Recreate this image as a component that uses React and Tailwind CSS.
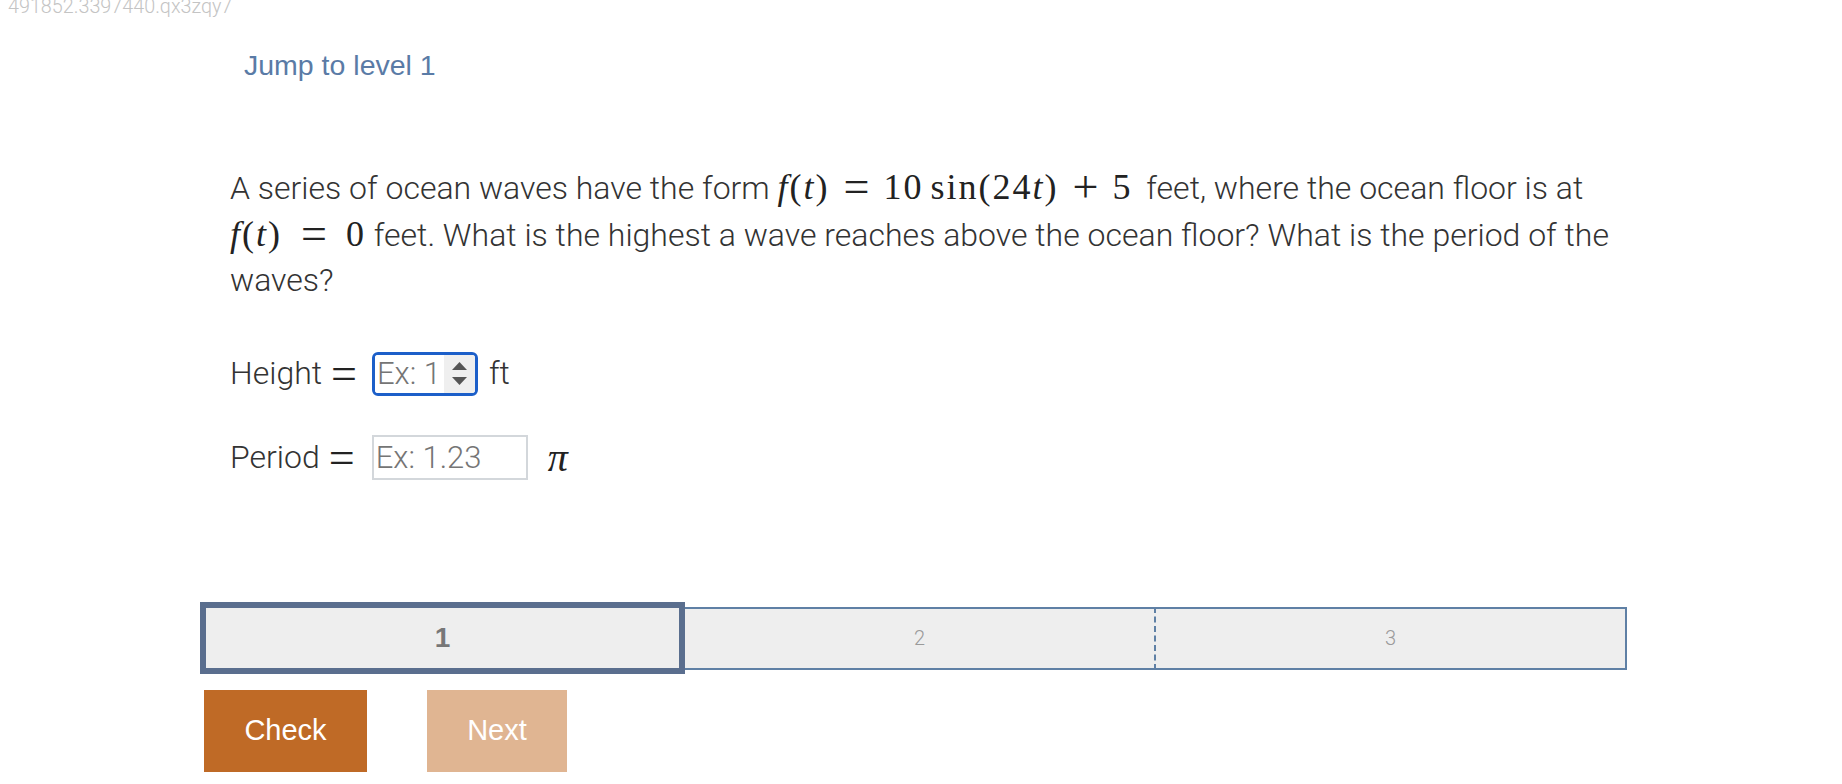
import React from 'react';

const Op = ({ children, gap = 'mx-[14px]' }) => (
  <span className={`inline-block text-[46px] leading-none align-[-3px] not-italic tracking-normal ${gap}`}>{children}</span>
);

const Math = ({ children, className = '' }) => (
  <span className={`font-['Liberation_Serif',serif] text-[36px] leading-none tracking-[2px] text-[#222] ${className}`}>{children}</span>
);

const Spinner = () => (
  <div className="flex h-full w-[31px] flex-col items-center justify-center gap-[7px] bg-[#efefef]">
    <svg width="15" height="8" viewBox="0 0 15 8">
      <path d="M7.5 0 L15 8 L0 8 Z" fill="#555" />
    </svg>
    <svg width="15" height="8" viewBox="0 0 15 8">
      <path d="M0 0 L15 0 L7.5 8 Z" fill="#555" />
    </svg>
  </div>
);

const App = () => {
  return (
    <div className="min-h-[784px] w-full bg-white font-['Roboto',sans-serif] font-light text-[#333]">
      <div className="h-[12px] pl-[8px] text-[19.75px] leading-[14.5px] text-[#c4c4c4]">491852.3397440.qx3zqy7</div>

      <div className="ml-[200px] w-[1427px]">
        <div className="ml-[44px] mt-[38px] h-[30px] font-['Liberation_Sans',Arial,sans-serif] text-[28.5px] font-normal leading-[30px] text-[#5a7ba6]">
          Jump to level 1
        </div>

        <p className="ml-[30px] mt-[84px] whitespace-nowrap text-[32px] leading-[45px]">
          A series of ocean waves have the form{' '}
          <Math className="mr-[6px]">
            <i>f</i>(<i>t</i>)<Op>=</Op>10<span className="ml-[7px]">sin</span>(24<i>t</i>)<Op gap="mx-[14px]">+</Op>5
          </Math>{' '}
          feet, where the ocean floor is at
          <br />
          <Math>
            <i>f</i>(<i>t</i>)<Op gap="mx-[19px]">=</Op>0
          </Math>{' '}
          feet. What is the highest a wave reaches above the ocean floor? What is the period of the
          <br />
          waves?
        </p>

        <div className="ml-[30px] mt-[48px] flex h-[45px] items-center text-[32px] leading-[45px]">
          <span>Height</span>
          <Math className="ml-[9px]">
            <Op gap="mx-0">=</Op>
          </Math>
          <div className="ml-[15px] flex h-[44px] w-[106px] overflow-hidden rounded-[6px] border-[3px] border-[#1c5fc9]">
            <input
              type="text"
              placeholder="Ex: 1"
              className="h-full w-0 flex-1 bg-white pl-[2px] font-['Roboto',sans-serif] text-[31px] font-light text-[#333] outline-none placeholder:text-[#757575]"
            />
            <Spinner />
          </div>
          <span className="ml-[11px]">ft</span>
        </div>

        <div className="ml-[30px] mt-[39px] flex h-[45px] items-center text-[32px] leading-[45px]">
          <span>Period</span>
          <Math className="ml-[9px]">
            <Op gap="mx-0">=</Op>
          </Math>
          <input
            type="text"
            placeholder="Ex: 1.23"
            className="ml-[17px] h-[45px] w-[156px] border-2 border-[#d3d7db] bg-white pl-[2px] font-['Roboto',sans-serif] text-[31px] font-light text-[#333] outline-none placeholder:text-[#757575]"
          />
          <Math className="ml-[20px] text-[40px]">
            <i>π</i>
          </Math>
        </div>

        <div className="mt-[122px] flex h-[72px] items-center">
          <div className="flex h-[72px] w-[485px] items-center justify-center border-[6px] border-[#5a6e8e] bg-[#eeeeee] font-['Liberation_Sans',Arial,sans-serif] text-[28px] font-bold text-[#777]">
            1
          </div>
          <div className="flex h-[63px] flex-1 items-center justify-center border-y-2 border-r-2 border-dashed border-y-[#5f80a5] border-r-[#5f80a5] bg-[#eeeeee] text-[20px] font-light text-[#9a9a9a] [border-top-style:solid] [border-bottom-style:solid]">
            2
          </div>
          <div className="flex h-[63px] flex-1 items-center justify-center border-y-2 border-r-2 border-solid border-[#5f80a5] bg-[#eeeeee] text-[20px] font-light text-[#9a9a9a]">
            3
          </div>
        </div>

        <div className="ml-[4px] mt-[16px] flex gap-[60px] font-['Liberation_Sans',Arial,sans-serif] text-[29px] font-normal text-white">
          <button className="h-[82px] w-[163px] bg-[#bf6a26]">Check</button>
          <button className="h-[82px] w-[140px] bg-[#e0b592]">Next</button>
        </div>
      </div>
    </div>
  );
};

export default App;
